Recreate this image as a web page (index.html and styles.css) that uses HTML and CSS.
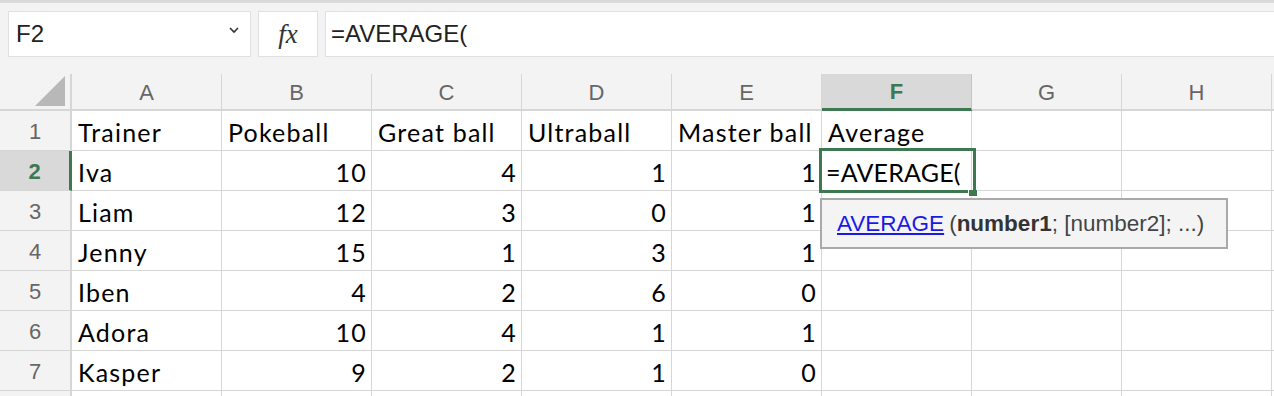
FILE: index.html
```html
<!DOCTYPE html>
<html>
<head>
<meta charset="utf-8">
<link rel="stylesheet" href="styles.css">
</head>
<body>
<div class="app">
  <div class="toolbar">
    <div class="namebox">
      <span class="name">F2</span>
      <svg class="chev" width="12" height="8" viewBox="0 0 12 8"><path d="M2 2 L6 6 L10 2" fill="none" stroke="#333" stroke-width="1.6"/></svg>
    </div>
    <div class="fxbox"><span class="fx">fx</span></div>
    <div class="formula">=AVERAGE(</div>
  </div>
  <div class="sheet">
    <div class="grid">
      <div class="corner"><span class="tri"></span></div>
      <div class="ch">A</div><div class="ch">B</div><div class="ch">C</div><div class="ch">D</div><div class="ch">E</div><div class="ch sel">F</div><div class="ch">G</div><div class="ch">H</div><div class="ch rest"></div>

      <div class="rh">1</div>
      <div class="c">Trainer</div><div class="c">Pokeball</div><div class="c">Great ball</div><div class="c">Ultraball</div><div class="c">Master ball</div><div class="c">Average</div><div class="c"></div><div class="c"></div><div class="c rest"></div>

      <div class="rh sel">2</div>
      <div class="c">Iva</div><div class="c n">10</div><div class="c n">4</div><div class="c n">1</div><div class="c n">1</div><div class="c edit">=AVERAGE(</div><div class="c"></div><div class="c"></div><div class="c rest"></div>

      <div class="rh">3</div>
      <div class="c">Liam</div><div class="c n">12</div><div class="c n">3</div><div class="c n">0</div><div class="c n">1</div><div class="c"></div><div class="c"></div><div class="c"></div><div class="c rest"></div>

      <div class="rh">4</div>
      <div class="c">Jenny</div><div class="c n">15</div><div class="c n">1</div><div class="c n">3</div><div class="c n">1</div><div class="c"></div><div class="c"></div><div class="c"></div><div class="c rest"></div>

      <div class="rh">5</div>
      <div class="c">Iben</div><div class="c n">4</div><div class="c n">2</div><div class="c n">6</div><div class="c n">0</div><div class="c"></div><div class="c"></div><div class="c"></div><div class="c rest"></div>

      <div class="rh">6</div>
      <div class="c">Adora</div><div class="c n">10</div><div class="c n">4</div><div class="c n">1</div><div class="c n">1</div><div class="c"></div><div class="c"></div><div class="c"></div><div class="c rest"></div>

      <div class="rh">7</div>
      <div class="c">Kasper</div><div class="c n">9</div><div class="c n">2</div><div class="c n">1</div><div class="c n">0</div><div class="c"></div><div class="c"></div><div class="c"></div><div class="c rest"></div>

      <div class="rh"></div>
      <div class="c"></div><div class="c"></div><div class="c"></div><div class="c"></div><div class="c"></div><div class="c"></div><div class="c"></div><div class="c"></div><div class="c rest"></div>
    </div>
    <div class="selbox"><span class="handle"></span></div>
    <div class="tip"><a class="fn" href="#">AVERAGE</a> (<b>number1</b>; [number2]; ...)</div>
  </div>
</div>
</body>
</html>
```
FILE: styles.css
```css
html, body {
  margin: 0;
  padding: 0;
  background: #f3f3f3;
  overflow: hidden;
}
.app {
  width: 1274px;
  height: 396px;
  overflow: hidden;
}
.toolbar {
  height: 74px;
  box-sizing: border-box;
  border-top: 3px solid #dadada;
  padding: 8px 0 0 8px;
  display: flex;
  gap: 7px;
  background: #f3f3f3;
}
.namebox, .fxbox, .formula {
  height: 46px;
  box-sizing: border-box;
  background: #fff;
  border: 1px solid #e0e0e0;
  display: flex;
  align-items: center;
}
.namebox {
  width: 243px;
  padding: 0 10px 0 7px;
  justify-content: space-between;
}
.name {
  font-family: "Liberation Sans", Arial, sans-serif;
  font-size: 24px;
  color: #222;
}
.chev { margin-top: -8px; }
.fxbox {
  width: 60px;
  justify-content: center;
}
.fx {
  font-family: "Liberation Serif", "Times New Roman", serif;
  font-style: italic;
  font-size: 27px;
  color: #333;
  margin-top: 1px;
}
.formula {
  flex: 1;
  padding-left: 5px;
  font-family: "Liberation Sans", Arial, sans-serif;
  font-size: 24px;
  color: #222;
  border-right: none;
}
.sheet {
  position: relative;
}
.grid {
  display: grid;
  grid-template-columns: 72px repeat(8, 150px) 2px;
  grid-template-rows: 37px repeat(8, 40px);
  background: #fff;
}
.corner {
  background: #f3f3f3;
  border-right: 2px solid #d6d6d6;
  border-bottom: 2px solid #d6d6d6;
  box-sizing: border-box;
  position: relative;
}
.tri {
  position: absolute;
  right: 5px;
  bottom: 3px;
  width: 0;
  height: 0;
  border-left: 30px solid transparent;
  border-bottom: 30px solid #b8b8b8;
}
.ch {
  background: #f3f3f3;
  box-sizing: border-box;
  border-right: 1px solid #d6d6d6;
  border-bottom: 2px solid #d6d6d6;
  font-family: "Liberation Sans", Arial, sans-serif;
  font-size: 22px;
  color: #666;
  display: flex;
  align-items: center;
  justify-content: center;
  padding-top: 2px;
}
.ch.sel {
  background: #d9d9d9;
  color: #3e7850;
  font-weight: bold;
  border-bottom: 3px solid #3e7850;
  border-right-color: #c4c4c4;
}
.ch.rest { border-right: none; }
.rh {
  background: #f3f3f3;
  box-sizing: border-box;
  border-right: 2px solid #d6d6d6;
  border-bottom: 1px solid #d6d6d6;
  font-family: "Liberation Sans", Arial, sans-serif;
  font-size: 22px;
  color: #666;
  display: flex;
  align-items: center;
  justify-content: center;
  padding-top: 2px;
}
.rh.sel {
  background: #d9d9d9;
  color: #3e7850;
  font-weight: bold;
  border-right: 3px solid #3e7850;
}
.c {
  box-sizing: border-box;
  border-right: 1px solid #d6d6d6;
  border-bottom: 1px solid #d6d6d6;
  font-family: Lato, "Liberation Sans", sans-serif;
  font-size: 25px;
  letter-spacing: 1.2px;
  color: #000;
  padding: 3px 4px 0 6px;
  display: flex;
  align-items: center;
  white-space: nowrap;
  overflow: visible;
}
.c.n { justify-content: flex-end; }
.c.edit {
  letter-spacing: 0.2px;
  padding-left: 4px;
}
.c.rest { border-right: none; }
.selbox {
  position: absolute;
  left: 819px;
  top: 74px;
  width: 157px;
  height: 45px;
  box-sizing: border-box;
  border: 3px solid #3e7850;
}
.handle {
  position: absolute;
  right: -5px;
  bottom: -7px;
  width: 8px;
  height: 6px;
  background: #3e7850;
  border: 1px solid #fff;
  border-top: none;
}
.tip {
  position: absolute;
  left: 820px;
  top: 124px;
  width: 408px;
  height: 51px;
  box-sizing: border-box;
  background: #f4f4f4;
  border: 2px solid #a9a9a9;
  font-family: "Liberation Sans", Arial, sans-serif;
  font-size: 22.5px;
  color: #444;
  display: flex;
  align-items: center;
  padding-left: 15px;
  padding-top: 1px;
  white-space: nowrap;
}
.fn {
  color: #1a1ae6;
  text-decoration: underline;
  margin-right: 5px;
}
.tip b { color: #333; }
```
